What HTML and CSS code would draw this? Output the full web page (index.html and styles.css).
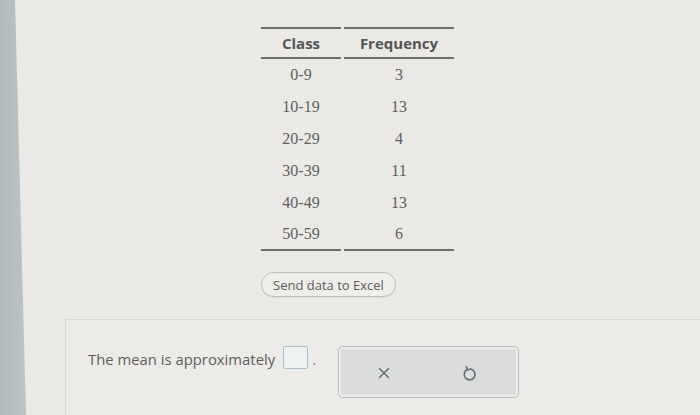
FILE: index.html
```html
<!DOCTYPE html>
<html>
<head>
<meta charset="utf-8">
<link rel="stylesheet" href="styles.css">
</head>
<body>
<div class="page">
  <div class="edge"></div>
  <div class="main">
    <div class="top">
      <table class="freq">
        <thead>
          <tr><th class="c1">Class</th><th class="c2">Frequency</th></tr>
        </thead>
        <tbody>
          <tr><td>0-9</td><td>3</td></tr>
          <tr><td>10-19</td><td>13</td></tr>
          <tr><td>20-29</td><td>4</td></tr>
          <tr><td>30-39</td><td>11</td></tr>
          <tr><td>40-49</td><td>13</td></tr>
          <tr class="last"><td>50-59</td><td>6</td></tr>
        </tbody>
      </table>
      <button class="excel">Send data to Excel</button>
    </div>
    <div class="panel">
      <span class="prompt">The mean is approximately</span>
      <span class="answer"></span>
      <span class="dot">.</span>
      <div class="tools">
        <span class="tool">
          <svg width="12" height="12" viewBox="0 0 12 12"><path d="M1.2 1.2 L10.8 10.8 M10.8 1.2 L1.2 10.8" stroke="#667076" stroke-width="1.6" fill="none"/></svg>
        </span>
        <span class="tool">
          <svg width="16" height="17" viewBox="0 0 16 17"><path d="M5.2 4.6 A5.4 5.4 0 1 0 9 4.2" stroke="#667076" stroke-width="1.7" fill="none" stroke-linecap="round"/><path d="M4.4 1.6 L5.4 4.9 L8.6 3.9" stroke="#667076" stroke-width="1.6" fill="none" stroke-linecap="round" stroke-linejoin="round"/></svg>
        </span>
      </div>
    </div>
  </div>
</div>
</body>
</html>
```
FILE: styles.css
```css
html, body {
  margin: 0;
  padding: 0;
  width: 700px;
  height: 415px;
  overflow: hidden;
  background: #ebe9e6;
}
.page {
  display: flex;
  height: 415px;
}
.edge {
  width: 26px;
  flex: none;
  background: linear-gradient(90deg, #b3babc, #bcc3c4);
  clip-path: polygon(0 0, 15px 0, 26px 100%, 0 100%);
  margin-right: -26px;
  position: relative;
  z-index: 1;
}
.main {
  flex: 1;
  display: flex;
  flex-direction: column;
}
.top {
  display: flex;
  flex-direction: column;
  align-items: flex-start;
  padding: 27px 0 0 258px;
}
.freq {
  border-collapse: separate;
  border-spacing: 3px 0;
  font-family: "Liberation Serif", serif;
  font-size: 16px;
  color: #5e5e5e;
}
.freq th {
  font-family: "Open Sans", sans-serif;
  font-weight: 700;
  font-size: 15px;
  color: #555;
  height: 28px;
  padding: 0;
  border-top: 2px solid #6e6e6e;
  border-bottom: 2px solid #6e6e6e;
}
.freq .c1 { width: 80px; }
.freq .c2 { width: 110px; }
.freq td {
  text-align: center;
  height: 32px;
  padding: 0;
}
.freq .last td {
  height: 30px;
  border-bottom: 2px solid #6e6e6e;
}
.excel {
  margin: 21px 0 0 3px;
  height: 25px;
  padding: 0 11px;
  border: 1.5px solid #bdbdbb;
  border-radius: 13px;
  background: #efeeeb;
  font-family: "Open Sans", sans-serif;
  font-size: 13px;
  color: #5a5a5a;
  box-shadow: 0 1px 1px rgba(0,0,0,0.06);
}
.panel {
  margin: 22px 0 0 65px;
  flex: 1;
  border: 1px solid #d9d7d3;
  border-right: none;
  border-bottom: none;
  background: #ecebe8;
  display: flex;
  align-items: flex-start;
  padding: 26px 0 0 22px;
}
.prompt {
  font-family: "Open Sans", sans-serif;
  font-size: 14.85px;
  color: #5d5d5d;
  margin-top: 3px;
}
.answer {
  width: 23px;
  height: 21px;
  margin-left: 8px;
  border: 1px solid #a9bfc4;
  border-radius: 2px;
  background: #eef1f1;
}
.dot {
  font-family: "Open Sans", sans-serif;
  font-size: 15px;
  color: #777;
  margin: 3px 0 0 4px;
}
.tools {
  margin-left: 22px;
  width: 181px;
  height: 52px;
  box-sizing: border-box;
  border: 1px solid #b9bcbd;
  border-radius: 5px;
  background: #dbdcdc;
  box-shadow: inset 0 0 0 2px #eeeeee;
  display: flex;
  align-items: center;
  gap: 66px;
  padding: 2px 0 0 35px;
}
.tool {
  display: flex;
  align-items: center;
  justify-content: center;
  width: 20px;
  height: 20px;
}
```
